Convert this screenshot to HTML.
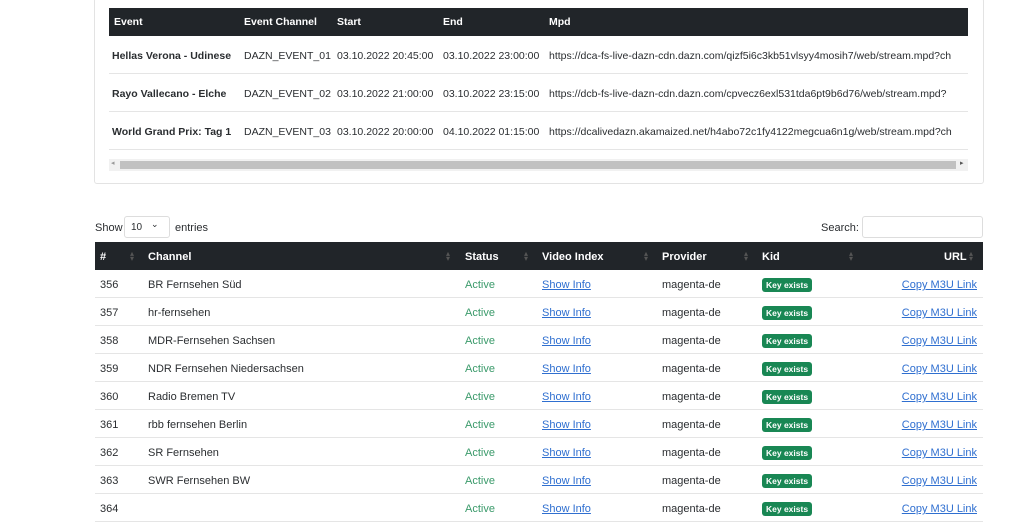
<!DOCTYPE html>
<html><head><meta charset="utf-8"><style>
body{margin:0;background:#fff;font-family:"Liberation Sans",sans-serif;font-size:11px;color:#2a2d30;width:1024px;height:502px;overflow:hidden;position:relative}
.card{position:absolute;left:94px;top:-2px;width:888px;height:184px;border:1px solid #e3e3e3;border-radius:3px}
.abs{position:absolute;white-space:nowrap}
.hd{position:absolute;background:#212529;color:#fff;font-weight:bold}
.line{position:absolute;height:1px;background:#e5e5e5}
.b{font-weight:bold}
.act{color:#3a9a6a}
.lnk{color:#2f6fd0;text-decoration:underline}
.badge{position:absolute;background:#198754;color:#fff;font-weight:bold;font-size:8.5px;border-radius:3px;padding:2px 4px;line-height:10px}
.sort{position:absolute;color:#555;font-size:8px;line-height:5px}
.top{font-size:10.5px}
</style></head><body>
<div class="card"></div>
<div class="hd" style="left:109px;top:8px;width:859px;height:28px"></div>
<div class="top">
<div class="abs b" style="left:114px;top:16px;color:#fff">Event</div>
<div class="abs b" style="left:244px;top:16px;color:#fff">Event Channel</div>
<div class="abs b" style="left:337px;top:16px;color:#fff">Start</div>
<div class="abs b" style="left:443px;top:16px;color:#fff">End</div>
<div class="abs b" style="left:549px;top:16px;color:#fff">Mpd</div>

<div class="abs b" style="left:112px;top:50px">Hellas Verona - Udinese</div>
<div class="abs" style="left:244px;top:50px">DAZN_EVENT_01</div>
<div class="abs" style="left:337px;top:50px">03.10.2022 20:45:00</div>
<div class="abs" style="left:443px;top:50px">03.10.2022 23:00:00</div>
<div class="abs" style="left:549px;top:50px;width:419px;overflow:hidden">https://dca-fs-live-dazn-cdn.dazn.com/qizf5i6c3kb51vlsyy4mosih7/web/stream.mpd?ch</div>
<div class="line" style="left:109px;top:73px;width:859px"></div>
<div class="abs b" style="left:112px;top:88px">Rayo Vallecano - Elche</div>
<div class="abs" style="left:244px;top:88px">DAZN_EVENT_02</div>
<div class="abs" style="left:337px;top:88px">03.10.2022 21:00:00</div>
<div class="abs" style="left:443px;top:88px">03.10.2022 23:15:00</div>
<div class="abs" style="left:549px;top:88px;width:419px;overflow:hidden">https://dcb-fs-live-dazn-cdn.dazn.com/cpvecz6exl531tda6pt9b6d76/web/stream.mpd?</div>
<div class="line" style="left:109px;top:111px;width:859px"></div>
<div class="abs b" style="left:112px;top:126px">World Grand Prix: Tag 1</div>
<div class="abs" style="left:244px;top:126px">DAZN_EVENT_03</div>
<div class="abs" style="left:337px;top:126px">03.10.2022 20:00:00</div>
<div class="abs" style="left:443px;top:126px">04.10.2022 01:15:00</div>
<div class="abs" style="left:549px;top:126px;width:419px;overflow:hidden">https://dcalivedazn.akamaized.net/h4abo72c1fy4122megcua6n1g/web/stream.mpd?ch</div>
</div>
<div class="line" style="left:109px;top:149px;width:859px"></div>
<div style="position:absolute;left:109px;top:159px;width:859px;height:12px;background:#f1f1f1"></div>
<div style="position:absolute;left:120px;top:161px;width:836px;height:8px;background:#c1c1c1"></div>
<div class="abs" style="left:111px;top:159px;font-size:7px;color:#999">◂</div>
<div class="abs" style="left:960px;top:159px;font-size:7px;color:#555">▸</div>

<div class="abs" style="left:95px;top:222px">Show</div>
<div style="position:absolute;left:124px;top:216px;width:46px;height:22px;border:1px solid #ddd;border-radius:3px;box-sizing:border-box"></div>
<div class="abs" style="left:131px;top:222px;font-size:10px">10</div>
<div class="abs" style="left:151px;top:219px;font-size:9px">⌄</div>
<div class="abs" style="left:175px;top:222px">entries</div>
<div class="abs" style="left:821px;top:222px">Search:</div>
<div style="position:absolute;left:862px;top:216px;width:121px;height:22px;border:1px solid #ddd;border-radius:3px;box-sizing:border-box"></div>

<div class="hd" style="left:95px;top:242px;width:888px;height:28px"></div>
<div class="abs b" style="left:100px;top:251px;color:#fff">#</div>
<div class="abs b" style="left:148px;top:251px;color:#fff">Channel</div>
<div class="abs b" style="left:465px;top:251px;color:#fff">Status</div>
<div class="abs b" style="left:542px;top:251px;color:#fff">Video Index</div>
<div class="abs b" style="left:662px;top:251px;color:#fff">Provider</div>
<div class="abs b" style="left:762px;top:251px;color:#fff">Kid</div>
<div class="abs b" style="left:944px;top:251px;color:#fff">URL</div>
<div class="sort" style="left:130px;top:251px">▴<br>▾</div>
<div class="sort" style="left:446px;top:251px">▴<br>▾</div>
<div class="sort" style="left:524px;top:251px">▴<br>▾</div>
<div class="sort" style="left:644px;top:251px">▴<br>▾</div>
<div class="sort" style="left:744px;top:251px">▴<br>▾</div>
<div class="sort" style="left:849px;top:251px">▴<br>▾</div>
<div class="sort" style="left:969px;top:251px">▴<br>▾</div>

<div id="rows"></div>
<script>
var d=[["356","BR Fernsehen Süd"],["357","hr-fernsehen"],["358","MDR-Fernsehen Sachsen"],["359","NDR Fernsehen Niedersachsen"],["360","Radio Bremen TV"],["361","rbb fernsehen Berlin"],["362","SR Fernsehen"],["363","SWR Fernsehen BW"],["364",""]];
var h="";
d.forEach(function(r,i){var y=270+i*28,t=y+9;
h+='<div class="abs" style="left:100px;top:'+t+'px">'+r[0]+'</div><div class="abs" style="left:148px;top:'+t+'px">'+r[1]+'</div><div class="abs act" style="left:465px;top:'+t+'px">Active</div><div class="abs lnk" style="left:542px;top:'+t+'px">Show Info</div><div class="abs" style="left:662px;top:'+t+'px">magenta-de</div><div class="badge" style="left:762px;top:'+(y+8)+'px">Key exists</div><div class="abs lnk" style="right:47px;top:'+t+'px">Copy M3U Link</div><div class="line" style="left:95px;top:'+(y+27)+'px;width:888px"></div>';});
document.getElementById("rows").innerHTML=h;
</script>
</body></html>
